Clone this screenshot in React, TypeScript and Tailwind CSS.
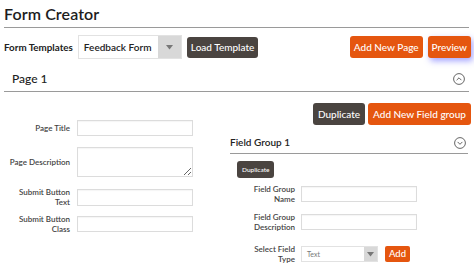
import React from 'react'

function CircleChevron({ up }: { up?: boolean }) {
  return (
    <svg width="12" height="12" viewBox="0 0 12 12" fill="none" stroke="#555" strokeWidth="0.9">
      <circle cx="6" cy="6" r="5.4" />
      {up ? <path d="M3.6 7.2 6 4.8l2.4 2.4" /> : <path d="M3.6 4.9 6 7.3l2.4-2.4" />}
    </svg>
  )
}

function Caret() {
  return (
    <svg width="7" height="5" viewBox="0 0 7 5">
      <path d="M0 0h7L3.5 4.5z" fill="#777" />
    </svg>
  )
}

function Row({ label, children, className = '' }: { label: React.ReactNode; children: React.ReactNode; className?: string }) {
  return (
    <div className={`flex items-center ${className}`}>
      <div className="w-[66px] shrink-0 text-right text-[8px] font-semibold leading-[10px] text-[#444]">{label}</div>
      <div className="ml-[7px]">{children}</div>
    </div>
  )
}

function FieldRow({ label, children, className = '' }: { label: React.ReactNode; children: React.ReactNode; className?: string }) {
  return (
    <div className={`flex items-center ${className}`}>
      <div className="w-[65px] shrink-0 text-right text-[8px] font-semibold leading-[10px] text-[#444]">{label}</div>
      <div className="ml-[6px]">{children}</div>
    </div>
  )
}

const input = 'block w-[116px] border border-[#dcdcdc] bg-white shadow-[inset_0_1px_1px_rgba(0,0,0,0.04)]'

export default function App() {
  return (
    <div className="h-[269px] w-[474px] overflow-hidden bg-white pl-[4px] pr-[3px] font-['Lato',sans-serif] text-[#1d1d1d]">
      <div className="mr-[2px] flex h-[28px] items-center border-b border-[#9a9a9a]">
        <h1 className="text-[16px] font-semibold leading-none tracking-[0.1px]">Form Creator</h1>
      </div>

      <div className="mt-[7px] flex h-[24px] items-center">
        <span className="text-[9.8px] font-bold text-[#222]">Form Templates</span>
        <div className="ml-[5px] flex h-[24px] w-[104px] items-stretch border border-[#e2e2e2] bg-white">
          <span className="flex flex-1 items-center pl-[5px] text-[10px] font-semibold text-[#222]">Feedback Form</span>
          <span className="flex w-[23px] items-center justify-center bg-[#d8d8d8]"><Caret /></span>
        </div>
        <button className="ml-[5px] h-[21px] rounded-[3px] bg-[#4a4440] px-[4px] text-[10px] font-medium text-white">Load Template</button>
        <div className="ml-auto flex items-center">
          <button className="h-[22px] rounded-[3px] bg-[#e5560f] px-[4px] text-[10px] font-medium text-white">Add New Page</button>
          <button className="ml-[5px] h-[22px] rounded-[3px] bg-[#e5560f] px-[4px] text-[10px] font-medium text-white shadow-[2px_3px_6px_rgba(90,90,255,0.55)]">Preview</button>
        </div>
      </div>

      <div className="mr-[2px] mt-[8px] flex h-[25px] items-center justify-between border-b border-[#9a9a9a] pl-[8px] pr-[4px]">
        <span className="text-[12px] font-medium text-[#222]">Page 1</span>
        <CircleChevron up />
      </div>

      <div className="flex">
        <div className="w-[226px] shrink-0 pt-[28px]">
          <Row label="Page Title">
            <div className={`${input} h-[16px]`} />
          </Row>
          <Row label="Page Description" className="mt-[11px]">
            <textarea className={`${input} h-[30px] resize`} />
          </Row>
          <Row label={<>Submit Button<br />Text</>} className="mt-[10px]">
            <div className={`${input} h-[17px]`} />
          </Row>
          <Row label={<>Submit Button<br />Class</>} className="mt-[7px]">
            <div className={`${input} h-[16px]`} />
          </Row>
        </div>

        <div className="flex-1">
          <div className="mt-[11px] flex justify-end">
            <button className="h-[22px] rounded-[3px] bg-[#4a4440] px-[5px] text-[10px] font-medium text-white">Duplicate</button>
            <button className="ml-[3px] h-[22px] rounded-[3px] bg-[#e5560f] px-[5px] text-[10px] font-medium text-white">Add New Field group</button>
          </div>
          <div className="mr-[3px] flex h-[29px] items-center justify-between border-b border-[#9a9a9a] pr-[2px] pt-[7px]">
            <span className="text-[10px] font-semibold text-[#222]">Field Group 1</span>
            <CircleChevron />
          </div>
          <button className="ml-[7px] mt-[6px] h-[17px] rounded-[3px] bg-[#4a4440] px-[5px] text-[6.5px] font-medium text-white">Duplicate</button>
          <FieldRow label={<>Field Group<br />Name</>} className="mt-[6px]">
            <div className={`${input} h-[16px]`} />
          </FieldRow>
          <FieldRow label={<>Field Group<br />Description</>} className="mt-[8px]">
            <div className={`${input} h-[16px]`} />
          </FieldRow>
          <FieldRow label={<>Select Field<br />Type</>} className="mt-[12px]">
            <div className="flex items-center">
              <div className="flex h-[16px] w-[77px] items-stretch border border-[#e2e2e2] bg-white">
                <span className="flex flex-1 items-center pl-[5px] text-[7px] text-[#777]">Text</span>
                <span className="flex w-[13px] items-center justify-center bg-[#d8d8d8]"><Caret /></span>
              </div>
              <button className="ml-[7px] h-[16px] rounded-[2px] bg-[#e5560f] px-[4px] text-[9.5px] font-medium text-white">Add</button>
            </div>
          </FieldRow>
        </div>
      </div>
    </div>
  )
}
